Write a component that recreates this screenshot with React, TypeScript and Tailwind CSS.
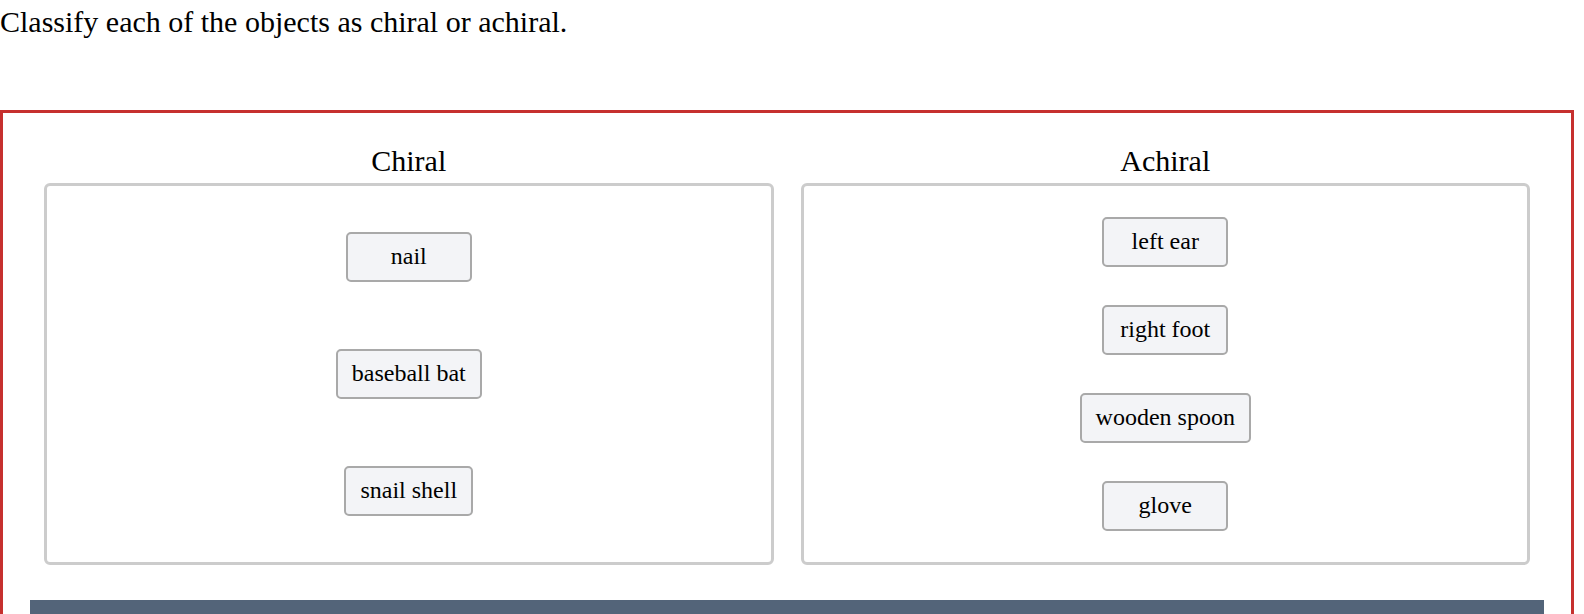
const chiral = ["nail", "baseball bat", "snail shell"];
const achiral = ["left ear", "right foot", "wooden spoon", "glove"];

function Chip({ label }: { label: string }) {
  return (
    <div className="min-w-[126px] rounded-[5px] border-2 border-[#a9a9a9] bg-[#f3f4f7] px-[14px] pb-[9px] pt-[7px] text-center text-[24px] leading-[30px]">
      {label}
    </div>
  );
}

export default function App() {
  return (
    <div className="font-['Liberation_Serif',serif] text-black">
      <p className="pt-[5px] text-[30px] leading-[34px]">
        Classify each of the objects as chiral or achiral.
      </p>
      <div className="mr-[10px] mt-[71px] border-[3px] border-[#c6302e] px-[41px] pt-[31px]">
        <div className="flex gap-[27px]">
          <div className="flex flex-1 flex-col">
            <h2 className="mb-[5px] text-center text-[30px] leading-[34px]">Chiral</h2>
            <div className="flex h-[382px] flex-col items-center justify-center gap-[67px] rounded-[6px] border-[3px] border-[#cccccc]">
              {chiral.map((c) => (
                <Chip key={c} label={c} />
              ))}
            </div>
          </div>
          <div className="flex flex-1 flex-col">
            <h2 className="mb-[5px] text-center text-[30px] leading-[34px]">Achiral</h2>
            <div className="flex h-[382px] flex-col items-center justify-center gap-[38px] rounded-[6px] border-[3px] border-[#cccccc]">
              {achiral.map((c) => (
                <Chip key={c} label={c} />
              ))}
            </div>
          </div>
        </div>
        <div className="-mx-[14px] mt-[35px] h-[40px] bg-[#536479]"></div>
      </div>
    </div>
  );
}
